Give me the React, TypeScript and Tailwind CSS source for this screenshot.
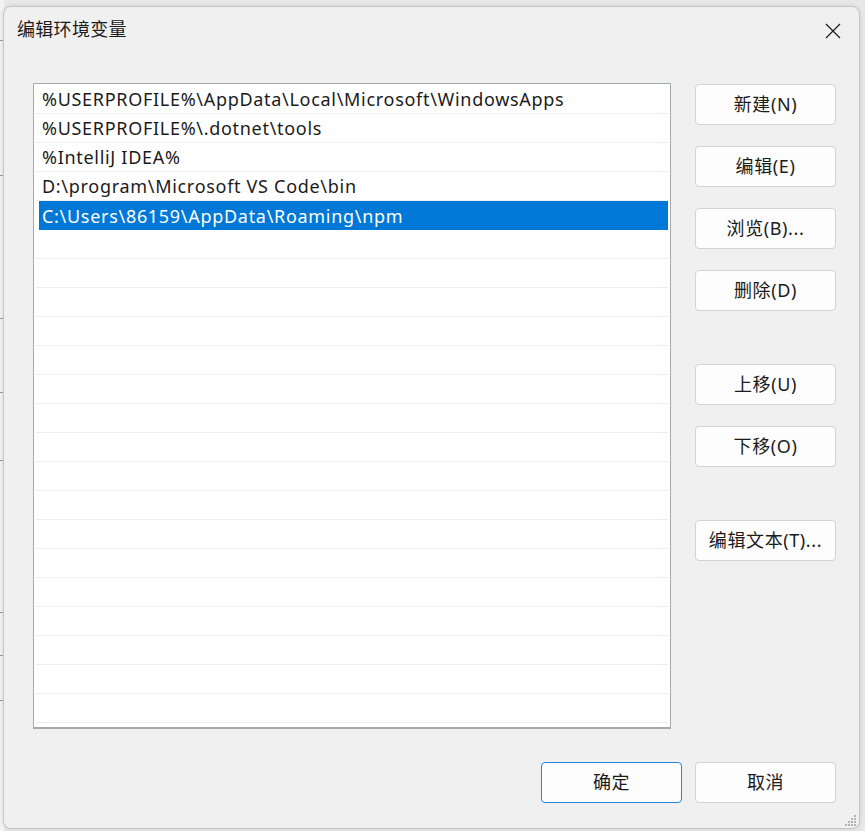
import React from 'react';

const paths = [
  '%USERPROFILE%\\AppData\\Local\\Microsoft\\WindowsApps',
  '%USERPROFILE%\\.dotnet\\tools',
  '%IntelliJ IDEA%',
  'D:\\program\\Microsoft VS Code\\bin',
  'C:\\Users\\86159\\AppData\\Roaming\\npm',
];

const FONT = { fontFamily: '"Noto Sans", "Noto Sans CJK SC", sans-serif' };

const WinButton: React.FC<{ label: string; primary?: boolean; className?: string }> = ({ label, primary, className }) => (
  <button
    className={`h-[41px] w-[141px] rounded-[4px] bg-[#fdfdfd] text-[18px] tracking-[0.6px] text-[#1b1b1b] ${
      primary ? 'border border-[#2a82da]' : 'border border-[#d3d3d3]'
    } ${className ?? ''}`}
  >
    {label}
  </button>
);

// gridlines of the window behind, peeking out at the left edge
const behindLines = [40, 175, 318, 392, 460, 612, 655, 700];

export default function App() {
  const rows = Array.from({ length: 23 }, (_, i) => paths[i] ?? '');
  const selected = 4;

  return (
    <div className="relative h-[831px] w-[865px] overflow-hidden bg-[#e8e8e8]" style={FONT}>
      {/* background window strip */}
      <div className="absolute left-0 top-0 h-full w-[4px] bg-[#f3f3f3]">
        {behindLines.map((y) => (
          <div key={y} className="absolute left-0 h-px w-full bg-[#9a9a9a]" style={{ top: y }} />
        ))}
      </div>

      {/* dialog */}
      <div className="absolute left-[3px] top-[6px] flex h-[823px] w-[857px] flex-col rounded-[8px] border border-[#c6c6c6] bg-[#f0f0f0] shadow-[0_0_4px_rgba(0,0,0,0.12)]">
        <div className="flex h-[44px] items-center justify-between pl-[13px] pr-[18px] pt-[1px]">
          <span className="text-[18px] tracking-[0.3px] text-[#1b1b1b]">编辑环境变量</span>
          <svg width="16" height="16" viewBox="0 0 16 16" className="mt-[2px]">
            <path d="M1 1 L15 15 M15 1 L1 15" stroke="#1b1b1b" strokeWidth="1.2" fill="none" />
          </svg>
        </div>

        <div className="mt-[32px] flex pl-[29px]">
          {/* list box */}
          <div className="h-[646px] w-[638px] overflow-hidden border border-b-2 border-[#a6a9ae] bg-white px-[2px] pt-[1px]">
            {rows.map((r, i) =>
              i === selected ? (
                <div
                  key={i}
                  className="ml-[3px] flex h-[29px] items-center bg-[#0078d7] pl-[3px] text-[18px] leading-none tracking-[0.7px] text-white"
                >
                  {r}
                </div>
              ) : (
                <div
                  key={i}
                  className="flex h-[29px] items-center border-b border-[#efefef] pl-[6px] text-[18px] leading-none tracking-[0.7px] text-[#1b1b1b]"
                >
                  {r}
                </div>
              )
            )}
          </div>

          {/* side buttons */}
          <div className="ml-[24px] flex flex-col pt-[1px]">
            <WinButton label="新建(N)" />
            <WinButton label="编辑(E)" className="mt-[21px]" />
            <WinButton label="浏览(B)..." className="mt-[21px]" />
            <WinButton label="删除(D)" className="mt-[21px]" />
            <WinButton label="上移(U)" className="mt-[53px]" />
            <WinButton label="下移(O)" className="mt-[21px]" />
            <WinButton label="编辑文本(T)..." className="mt-[53px]" />
          </div>
        </div>

        <div className="mt-[33px] flex justify-end gap-[13px] pr-[23px]">
          <WinButton label="确定" primary />
          <WinButton label="取消" />
        </div>

        {/* resize grip */}
        <svg className="absolute bottom-[2px] right-[2px]" width="12" height="12" viewBox="0 0 12 12">
          {[
            [9, 1],
            [6, 4],
            [9, 4],
            [3, 7],
            [6, 7],
            [9, 7],
            [0, 10],
            [3, 10],
            [6, 10],
            [9, 10],
          ].map(([x, y]) => (
            <rect key={`${x}-${y}`} x={x} y={y} width="2" height="2" fill="#b4b4b4" />
          ))}
        </svg>
      </div>
    </div>
  );
}
